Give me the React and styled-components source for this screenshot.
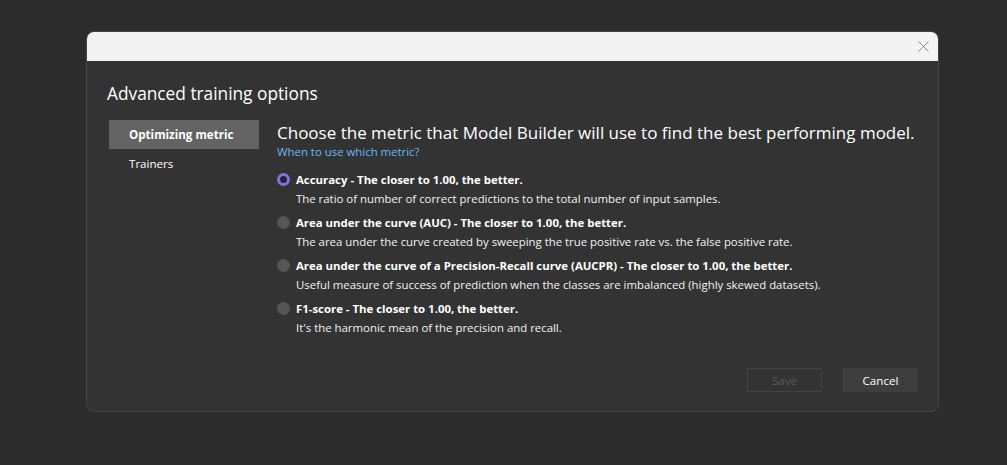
import { useState } from "react";
import styled, { createGlobalStyle } from "styled-components";

const GlobalStyle = createGlobalStyle`
  html, body {
    margin: 0;
    background: #2c2c2c;
  }
  body {
    font-family: "Open Sans", "Noto Sans", sans-serif;
    color: #ffffff;
  }
`;

const Page = styled.div`
  width: 1007px;
  height: 465px;
  padding: 31px 0 0 86px;
  box-sizing: border-box;
`;

const Dialog = styled.div`
  width: 853px;
  height: 381px;
  box-sizing: border-box;
  border: 1px solid #454545;
  border-radius: 8px;
  background: #333333;
  overflow: hidden;
  display: flex;
  flex-direction: column;
`;

const TitleBar = styled.div`
  height: 29px;
  background: #f3f3f3;
  display: flex;
  justify-content: flex-end;
  align-items: center;
  padding-right: 3px;
`;

const CloseButton = styled.button`
  width: 24px;
  height: 24px;
  border: none;
  background: transparent;
  padding: 0;
  display: flex;
  align-items: center;
  justify-content: center;
  cursor: pointer;
`;

const Body = styled.div`
  flex: 1;
  display: flex;
  flex-direction: column;
  padding: 21px 20px 19px 20px;
`;

const DialogTitle = styled.h1`
  margin: 0 0 14px;
  font-size: 17.3px;
  font-weight: 400;
  line-height: 24px;
`;

const Columns = styled.div`
  display: flex;
  gap: 18px;
`;

const Sidebar = styled.nav`
  width: 150px;
  margin-left: 2px;
  display: flex;
  flex-direction: column;
`;

const NavItem = styled.div`
  height: 29px;
  line-height: 29px;
  padding-left: 20px;
  font-size: 11.6px;
  font-weight: ${(p) => (p.$active ? 700 : 400)};
  background: ${(p) => (p.$active ? "#636363" : "transparent")};
  cursor: pointer;
`;

const Content = styled.div`
  flex: 1;
  display: flex;
  flex-direction: column;
`;

const Heading = styled.h2`
  margin: 1px 0 0;
  font-size: 17px;
  font-weight: 400;
  line-height: 23px;
  white-space: nowrap;
`;

const HelpLink = styled.a`
  font-size: 11.4px;
  line-height: 16px;
  color: #6cb8f6;
  cursor: pointer;
  align-self: flex-start;
`;

const Options = styled.div`
  margin-top: 10px;
  display: flex;
  flex-direction: column;
  gap: 5px;
`;

const Option = styled.label`
  display: grid;
  grid-template-columns: 13px 1fr;
  column-gap: 6px;
  cursor: pointer;
`;

const Radio = styled.span`
  width: 13px;
  height: 13px;
  margin-top: 3px;
  box-sizing: border-box;
  border-radius: 50%;
  background: ${(p) => (p.$checked ? "#262630" : "#555555")};
  border: ${(p) => (p.$checked ? "3px solid #7f74e3" : "none")};
`;

const OptionTitle = styled.span`
  font-size: 11.4px;
  font-weight: 700;
  line-height: 19px;
`;

const OptionDesc = styled.span`
  grid-column: 2;
  font-size: 11.4px;
  line-height: 19px;
  color: #f2f2f2;
`;

const Footer = styled.div`
  margin-top: auto;
  display: flex;
  justify-content: flex-end;
  gap: 21px;
`;

const Button = styled.button`
  width: 75px;
  height: 24px;
  box-sizing: border-box;
  font-family: inherit;
  font-size: 11.6px;
  border: 1px solid ${(p) => (p.disabled ? "#444444" : "#3e3e3e")};
  background: ${(p) => (p.disabled ? "transparent" : "#3e3e3e")};
  color: ${(p) => (p.disabled ? "#5a5a5a" : "#ffffff")};
  cursor: ${(p) => (p.disabled ? "default" : "pointer")};
`;

const metrics = [
  {
    title: "Accuracy - The closer to 1.00, the better.",
    desc: "The ratio of number of correct predictions to the total number of input samples.",
  },
  {
    title: "Area under the curve (AUC) - The closer to 1.00, the better.",
    desc: "The area under the curve created by sweeping the true positive rate vs. the false positive rate.",
  },
  {
    title: "Area under the curve of a Precision-Recall curve (AUCPR) - The closer to 1.00, the better.",
    desc: "Useful measure of success of prediction when the classes are imbalanced (highly skewed datasets).",
  },
  {
    title: "F1-score - The closer to 1.00, the better.",
    desc: "It's the harmonic mean of the precision and recall.",
  },
];

const App = () => {
  const [tab, setTab] = useState(0);
  const [metric, setMetric] = useState(0);

  return (
    <Page>
      <GlobalStyle />
      <Dialog>
        <TitleBar>
          <CloseButton aria-label="Close">
            <svg width="11" height="11" viewBox="0 0 11 11">
              <path d="M0.5 0.5 L10.5 10.5 M10.5 0.5 L0.5 10.5" stroke="#8a8a8a" strokeWidth="1" />
            </svg>
          </CloseButton>
        </TitleBar>
        <Body>
          <DialogTitle>Advanced training options</DialogTitle>
          <Columns>
            <Sidebar>
              <NavItem $active={tab === 0} onClick={() => setTab(0)}>
                Optimizing metric
              </NavItem>
              <NavItem $active={tab === 1} onClick={() => setTab(1)}>
                Trainers
              </NavItem>
            </Sidebar>
            <Content>
              <Heading>Choose the metric that Model Builder will use to find the best performing model.</Heading>
              <HelpLink>When to use which metric?</HelpLink>
              <Options>
                {metrics.map((m, i) => (
                  <Option key={m.title} onClick={() => setMetric(i)}>
                    <Radio $checked={metric === i} />
                    <OptionTitle>{m.title}</OptionTitle>
                    <OptionDesc>{m.desc}</OptionDesc>
                  </Option>
                ))}
              </Options>
            </Content>
          </Columns>
          <Footer>
            <Button disabled>Save</Button>
            <Button>Cancel</Button>
          </Footer>
        </Body>
      </Dialog>
    </Page>
  );
};

export default App;
